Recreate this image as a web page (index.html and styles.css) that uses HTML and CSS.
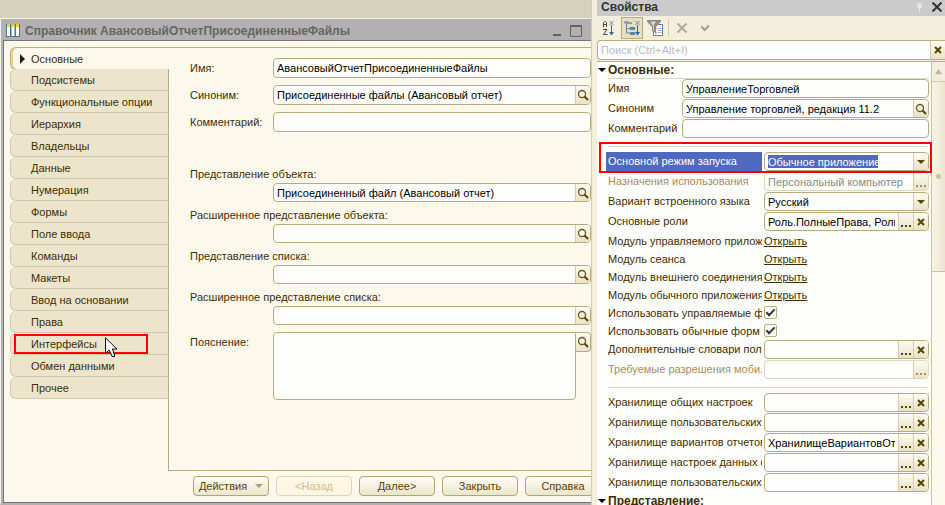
FILE: index.html
```html
<!DOCTYPE html>
<html lang="ru">

<head>
    <meta charset="UTF-8">
    <meta name="viewport" content="width=device-width, initial-scale=1.0">
    <title>Справочник АвансовыйОтчетПрисоединенныеФайлы</title>
    <link rel="stylesheet" href="styles.css">
</head>

<body>
    <!-- shared icons -->
    <svg class="defs" aria-hidden="true">
        <symbol id="i-search" viewBox="0 0 12 12">
            <circle cx="5" cy="5" r="3.5" fill="#fffdf2" stroke="#6b5310" stroke-width="1.3" />
            <path d="M7.5 7.5L11 11" stroke="#5a4300" stroke-width="2" />
        </symbol>
        <symbol id="i-down" viewBox="0 0 8 4">
            <path d="M0 0h8L4 4z" fill="currentColor" />
        </symbol>
        <symbol id="i-clear" viewBox="0 0 8 8">
            <path d="M1 1l6 6M7 1L1 7" stroke="currentColor" stroke-width="2" />
        </symbol>
        <symbol id="i-dots" viewBox="0 0 10 2">
            <path d="M0 0h2v2H0zM4 0h2v2H4zM8 0h2v2H8z" fill="currentColor" />
        </symbol>
    </svg>

    <main id="desktop">
        <section class="window">
            <header class="titlebar">
                <svg class="title-icon" viewBox="0 0 14 13">
                    <rect width="14" height="13" fill="#4d7590" />
                    <path d="M1 1h3v11H1zM5.500 1h3v11h-3zM10 1h3v11h-3z" fill="#fff" />
                    <path d="M1 0h3v3H1zM5.500 0h3v3h-3zM10 0h3v3h-3z" fill="#f0cf3c" />
                </svg>
                <h1>Справочник АвансовыйОтчетПрисоединенныеФайлы</h1>
                <button class="win-btn" aria-label="Свернуть"><svg viewBox="0 0 12 12"><path d="M2 10h8" stroke="#666661" stroke-width="2" /></svg></button>
                <button class="win-btn" aria-label="Развернуть"><svg viewBox="0 0 12 12"><path d="M.5 1h11v10.500H.5z" fill="none" stroke="#666661" /><path d="M0 1h12" stroke="#666661" stroke-width="2" /></svg></button>
            </header>

            <div class="window-body">
                <nav class="tabs">
                    <button class="tab active">Основные</button>
                    <button class="tab">Подсистемы</button>
                    <button class="tab">Функциональные опции</button>
                    <button class="tab">Иерархия</button>
                    <button class="tab">Владельцы</button>
                    <button class="tab">Данные</button>
                    <button class="tab">Нумерация</button>
                    <button class="tab">Формы</button>
                    <button class="tab">Поле ввода</button>
                    <button class="tab">Команды</button>
                    <button class="tab">Макеты</button>
                    <button class="tab">Ввод на основании</button>
                    <button class="tab">Права</button>
                    <button class="tab marked">Интерфейсы
                        <svg class="cursor" viewBox="0 0 12 21"><path d="M.5 .8V16.500l3.700-3.500 3 6.500h2.300V18L7.500 12H11.800z" fill="#fff" stroke="#000" /></svg>
                    </button>
                    <button class="tab">Обмен данными</button>
                    <button class="tab">Прочее</button>
                </nav>

                <form class="page">
                    <div class="row">
                        <label for="name">Имя:</label>
                        <div class="field"><input type="text" id="name" value="АвансовыйОтчетПрисоединенныеФайлы"></div>
                    </div>
                    <div class="row">
                        <label for="synonym">Синоним:</label>
                        <div class="field"><input type="text" id="synonym" value="Присоединенные файлы (Авансовый отчет)"><button type="button" aria-label="Открыть"><svg class="search"><use href="#i-search" /></svg></button></div>
                    </div>
                    <div class="row">
                        <label for="comment">Комментарий:</label>
                        <div class="field"><input type="text" id="comment"></div>
                    </div>

                    <div class="stacked first">
                        <label for="objView">Представление объекта:</label>
                        <div class="field"><input type="text" id="objView" value="Присоединенный файл (Авансовый отчет)"><button type="button" aria-label="Открыть"><svg class="search"><use href="#i-search" /></svg></button></div>
                    </div>
                    <div class="stacked">
                        <label for="objViewExt">Расширенное представление объекта:</label>
                        <div class="field"><input type="text" id="objViewExt"><button type="button" aria-label="Открыть"><svg class="search"><use href="#i-search" /></svg></button></div>
                    </div>
                    <div class="stacked">
                        <label for="listView">Представление списка:</label>
                        <div class="field"><input type="text" id="listView"><button type="button" aria-label="Открыть"><svg class="search"><use href="#i-search" /></svg></button></div>
                    </div>
                    <div class="stacked">
                        <label for="listViewExt">Расширенное представление списка:</label>
                        <div class="field"><input type="text" id="listViewExt"><button type="button" aria-label="Открыть"><svg class="search"><use href="#i-search" /></svg></button></div>
                    </div>
                    <div class="row note">
                        <label for="note">Пояснение:</label>
                        <textarea id="note"></textarea>
                        <button type="button" class="note-btn" aria-label="Открыть"><svg class="search"><use href="#i-search" /></svg></button>
                    </div>
                </form>
            </div>

            <footer class="actions">
                <button>Действия <svg class="down"><use href="#i-down" /></svg></button>
                <button disabled>&lt;Назад</button>
                <button>Далее&gt;</button>
                <button>Закрыть</button>
                <button>Справка</button>
            </footer>
        </section>
    </main>

    <aside id="properties">
        <header class="panel-title">
            <h2>Свойства</h2>
            <svg class="pin" viewBox="0 0 5 9"><path d="M.5 0h4v5h-4zM2 5h1v4H2z" fill="#e8e8e8" /></svg>
            <button class="close" aria-label="Закрыть"><svg viewBox="0 0 10 10"><path d="M.5 .5l9 9M9.500 .5l-9 9" stroke="#333" stroke-width="2" /></svg></button>
        </header>

        <div class="toolbar">
            <button aria-label="По алфавиту">
                <svg viewBox="0 0 16 16">
                    <path d="M2.500 7V2.500L3.500 1.500h1L5.500 2.500V7M2.500 4.500h3M2 9.500h4L2.500 14.500H6.500" fill="none" stroke="#444" />
                    <path d="M10.500 5v9" stroke="#2d6da3" />
                    <path d="M8.500 1l4 4M12.500 1l-4 4" stroke="#5b8fc0" />
                    <path d="M8 12h5l-2.500 3.500z" fill="#2d6da3" />
                </svg>
            </button>
            <button class="pressed" aria-label="По категориям">
                <svg viewBox="0 0 16 16">
                    <path d="M1 1v2.500h5M2.500 4v9h4M2.500 8.500h4" fill="none" stroke="#6f8796" />
                    <path d="M1 1h3l1 1h3v2H1z" fill="#8aa0ad" />
                    <path d="M6 7h5v3H6zM6 12h5v3H6z" fill="#5b88a8" />
                    <path d="M13.500 5v9" stroke="#2d6da3" />
                    <path d="M11.500 1l4 4M15.500 1l-4 4" stroke="#5b8fc0" />
                    <path d="M11 12h5l-2.500 3.500z" fill="#2d6da3" />
                </svg>
            </button>
            <button aria-label="Только важные">
                <svg viewBox="0 0 16 16">
                    <path d="M6.500 4.500h9v11h-9z" fill="#fff" stroke="#5a7fa3" />
                    <path d="M8 8h1.500v1.500H8zM8 12h1.500v1.500H8z" fill="#e0552b" />
                    <path d="M10.500 8.500h4M10.500 10.500h4M10.500 12.500h4" stroke="#9eb6d0" />
                    <path d="M0 0h14v1.500L9 7v6l-4-2V7L0 1.500z" fill="#8a8a86" />
                    <path d="M3 1.500h6L7 5v6L6 10V6z" fill="#d5d5d0" />
                </svg>
            </button>
            <i class="divider"></i>
            <button disabled aria-label="Отменить"><svg viewBox="0 0 16 16"><path d="M3.500 3.500l9 9M12.500 3.500l-9 9" stroke="#b5a5a3" stroke-width="2" /></svg></button>
            <button disabled aria-label="Применить"><svg viewBox="0 0 16 16"><path d="M4.500 6.500l3 3.500 4.500-4.500" fill="none" stroke="#9aa393" stroke-width="2" /></svg></button>
        </div>

        <div class="field find"><input type="text" placeholder="Поиск (Ctrl+Alt+I)" aria-label="Поиск"><button aria-label="Очистить"><svg class="clear"><use href="#i-clear" /></svg></button></div>

        <div class="scroller">
            <form class="props">
                <h3><svg class="down"><use href="#i-down" /></svg>Основные:</h3>
                <div class="prop wide">
                    <label for="pName">Имя</label>
                    <div class="field"><input type="text" id="pName" value="УправлениеТорговлей"></div>
                </div>
                <div class="prop wide">
                    <label for="pSynonym">Синоним</label>
                    <div class="field"><input type="text" id="pSynonym" value="Управление торговлей, редакция 11.2"><button type="button" aria-label="Открыть"><svg class="search"><use href="#i-search" /></svg></button></div>
                </div>
                <div class="prop wide">
                    <label for="pComment">Комментарий</label>
                    <div class="field"><input type="text" id="pComment"></div>
                </div>

                <hr>
                <div class="prop current">
                    <label for="runMode">Основной режим запуска</label>
                    <div class="field"><select id="runMode"><option>Обычное приложение</option></select><span class="drop"><svg class="down"><use href="#i-down" /></svg></span></div>
                </div>
                <div class="prop off">
                    <label for="purpose">Назначения использования</label>
                    <div class="field"><input type="text" id="purpose" value="Персональный компьютер" disabled><button type="button" disabled aria-label="Выбрать"><svg class="dots"><use href="#i-dots" /></svg></button></div>
                </div>
                <div class="prop">
                    <label for="lang">Вариант встроенного языка</label>
                    <div class="field"><select id="lang"><option>Русский</option></select><span class="drop"><svg class="down"><use href="#i-down" /></svg></span></div>
                </div>
                <div class="prop">
                    <label for="roles">Основные роли</label>
                    <div class="field"><input type="text" id="roles" value="Роль.ПолныеПрава, Роль"><button type="button" aria-label="Выбрать"><svg class="dots"><use href="#i-dots" /></svg></button><button type="button" aria-label="Очистить"><svg class="clear"><use href="#i-clear" /></svg></button></div>
                </div>
                <div class="prop short"><span class="caption">Модуль управляемого прилож</span><a href="#">Открыть</a></div>
                <div class="prop short"><span class="caption">Модуль сеанса</span><a href="#">Открыть</a></div>
                <div class="prop short"><span class="caption">Модуль внешнего соединения</span><a href="#">Открыть</a></div>
                <div class="prop short"><span class="caption">Модуль обычного приложения</span><a href="#">Открыть</a></div>
                <div class="prop short">
                    <label for="managed">Использовать управляемые ф</label>
                    <input type="checkbox" id="managed" checked>
                </div>
                <div class="prop short">
                    <label for="ordinary">Использовать обычные форм</label>
                    <input type="checkbox" id="ordinary" checked>
                </div>
                <div class="prop">
                    <label for="dict">Дополнительные словари пол</label>
                    <div class="field"><input type="text" id="dict"><button type="button" aria-label="Выбрать"><svg class="dots"><use href="#i-dots" /></svg></button><button type="button" aria-label="Очистить"><svg class="clear"><use href="#i-clear" /></svg></button></div>
                </div>
                <div class="prop off">
                    <label for="mobile">Требуемые разрешения моби.</label>
                    <div class="field"><input type="text" id="mobile" disabled><button type="button" disabled aria-label="Выбрать"><svg class="dots"><use href="#i-dots" /></svg></button></div>
                </div>

                <hr>
                <div class="prop">
                    <label for="st1">Хранилище общих настроек</label>
                    <div class="field"><input type="text" id="st1"><button type="button" aria-label="Выбрать"><svg class="dots"><use href="#i-dots" /></svg></button><button type="button" aria-label="Очистить"><svg class="clear"><use href="#i-clear" /></svg></button></div>
                </div>
                <div class="prop">
                    <label for="st2">Хранилище пользовательских</label>
                    <div class="field"><input type="text" id="st2"><button type="button" aria-label="Выбрать"><svg class="dots"><use href="#i-dots" /></svg></button><button type="button" aria-label="Очистить"><svg class="clear"><use href="#i-clear" /></svg></button></div>
                </div>
                <div class="prop">
                    <label for="st3">Хранилище вариантов отчетов</label>
                    <div class="field"><input type="text" id="st3" value="ХранилищеВариантовОтч"><button type="button" aria-label="Выбрать"><svg class="dots"><use href="#i-dots" /></svg></button><button type="button" aria-label="Очистить"><svg class="clear"><use href="#i-clear" /></svg></button></div>
                </div>
                <div class="prop">
                    <label for="st4">Хранилище настроек данных ф</label>
                    <div class="field"><input type="text" id="st4"><button type="button" aria-label="Выбрать"><svg class="dots"><use href="#i-dots" /></svg></button><button type="button" aria-label="Очистить"><svg class="clear"><use href="#i-clear" /></svg></button></div>
                </div>
                <div class="prop">
                    <label for="st5">Хранилище пользовательских</label>
                    <div class="field"><input type="text" id="st5"><button type="button" aria-label="Выбрать"><svg class="dots"><use href="#i-dots" /></svg></button><button type="button" aria-label="Очистить"><svg class="clear"><use href="#i-clear" /></svg></button></div>
                </div>
                <h3><svg class="down"><use href="#i-down" /></svg>Представление:</h3>
            </form>
            <div class="scrollbar">
                <button aria-label="Вверх"><svg viewBox="0 0 8 8"><path d="M0 7L4 1l4 6z" fill="#b9b6a8" /></svg></button>
                <div class="thumb"></div>
            </div>
        </div>
    </aside>
</body>

</html>
```

FILE: styles.css
```css
*,
*:before,
*:after {
    box-sizing: border-box;
    margin: 0;
    padding: 0;
}

body {
    display: flex;
    height: 100vh;
    overflow: hidden;
    background: #d5d1bd;
    color: #3f2d00;
    font: 11px/16px "Liberation Sans", Arial, sans-serif;
}

button,
input,
select,
textarea {
    font: inherit;
    color: inherit;
    border: 0;
    background: none;
    outline: 0;
}

svg {
    display: block;
    flex: none;
}

.defs {
    position: absolute;
    width: 0;
    height: 0;
}

.search {
    width: 12px;
    height: 12px;
}

.down {
    width: 8px;
    height: 4px;
}

.clear {
    width: 8px;
    height: 8px;
}

.dots {
    width: 10px;
    height: 2px;
    margin-top: 8px;
}

/* left side */
#desktop {
    flex: 1;
    min-width: 0;
    display: flex;
    padding-top: 18px;
    overflow: hidden;
    border-right: 1px solid #d0cdc4;
}

.window {
    flex: 1;
    min-width: 0;
    display: flex;
    flex-direction: column;
    border-top: 1px solid #f4f2ea;
    border-left: 1px solid #f4f2ea;
    border-bottom: 2px solid #b3b0b3;
    background: #b3b0b3;
    padding-left: 2px;
}

.titlebar {
    display: flex;
    align-items: center;
    height: 21px;
    padding: 2px 9px 0 3px;
}

.title-icon {
    width: 14px;
    height: 13px;
    margin-right: 5px;
}

h1 {
    flex: 1;
    font-size: 12px;
    line-height: 18px;
    color: #666661;
    white-space: nowrap;
}

.win-btn {
    width: 12px;
    margin-left: 7px;
}

.window-body {
    flex: 1;
    min-height: 0;
    display: flex;
    padding: 6px 0 0 6px;
    background: #fcf9ec;
    border-top: 1px solid #77756f;
    border-left: 1px solid #77756f;
}

.tabs {
    width: 159px;
    display: flex;
    flex-direction: column;
    position: relative;
    z-index: 1;
}

.tabs:after {
    content: '';
    flex: 1;
    border-right: 1px solid #b5ad80;
}

.tab {
    position: relative;
    height: 22px;
    padding-left: 20px;
    text-align: left;
    background: #ece5cc;
    border: 1px solid #cfc8ac;
    border-top-width: 0;
    border-right-color: #b5ad80;
    border-radius: 6px 0 0 6px;
}

.tab.active {
    height: 23px;
    background: #fcf9ec;
    border-color: #b5ad80;
    border-top-width: 1px;
    border-right: 0;
    box-shadow: inset 2px 0 #f8d08c;
    margin-bottom: -1px;
}

.tab.active:before {
    content: '';
    position: absolute;
    left: 9px;
    top: 6px;
    border: 5px solid transparent;
    border-left-color: #222;
    border-right: 0;
}

.tab.marked {
    z-index: 1;
}

.tab.marked:after {
    content: '';
    position: absolute;
    left: 3px;
    top: 1px;
    width: 134px;
    height: 20px;
    border: 2px solid #ff0000;
}

.cursor {
    position: absolute;
    z-index: 1;
    left: 94px;
    top: 4px;
    width: 12px;
    height: 21px;
}

.page {
    flex: 1;
    min-width: 0;
    padding: 10px 0 0 21px;
    border-top: 1px solid #b5ad80;
    border-bottom: 1px solid #b5ad80;
}

.row {
    display: flex;
    margin-bottom: 7px;
}

.row label {
    width: 83px;
    padding-top: 2px;
}

.field {
    flex: 1;
    min-width: 0;
    display: flex;
    height: 20px;
    border: 1px solid #b5ad80;
    border-radius: 4px;
    background: #fdfefc;
    overflow: hidden;
}

.field input,
.field select {
    flex: 1;
    width: 0;
    padding: 0 3px;
    color: #000;
}

.field button,
.drop,
.note-btn {
    display: flex;
    align-items: center;
    justify-content: center;
    width: 15px;
    color: #5a4300;
    border-left: 1px solid #d3ccac;
    background: linear-gradient(#fdfbf2, #e9e2c6);
}

.stacked {
    margin-bottom: 5px;
}

.stacked.first {
    margin-top: 34px;
}

.stacked label {
    display: block;
    line-height: 17px;
}

.stacked .field {
    height: 19px;
    margin-left: 83px;
}

.note {
    padding-top: 2px;
}

.note textarea {
    flex: 1;
    min-width: 0;
    height: 68px;
    border: 1px solid #b5ad80;
    border-radius: 4px 0 4px 4px;
    background: #fdfefc;
    resize: none;
}

.note-btn {
    height: 20px;
    border: 1px solid #b5ad80;
    border-left: 0;
    border-radius: 0 4px 4px 0;
}

.actions {
    display: flex;
    gap: 7px;
    padding: 5px 0 6px 189px;
    border-left: 1px solid #77756f;
    border-bottom: 1px solid #77756f;
    background: #fcf9ec;
    overflow: hidden;
}

.actions button {
    flex: none;
    display: flex;
    align-items: center;
    justify-content: center;
    gap: 8px;
    width: 76px;
    height: 20px;
    color: #5a4300;
    border: 1px solid #aea678;
    border-radius: 4px;
    background: linear-gradient(#fefdf6, #ebe5cb);
}

.actions button:disabled {
    color: #d9b98a;
    border-color: #ddd5b8;
    background: #fcf6e4;
}

.actions .down {
    color: #b09a70;
}

/* properties panel */
#properties {
    width: 353px;
    display: flex;
    flex-direction: column;
    border-left: 5px solid #f3efdc;
    background: #f3efdc;
}

.panel-title {
    display: flex;
    align-items: center;
    height: 16px;
    padding: 0 3px 2px 4px;
    background: #cbcbcb;
}

h2 {
    flex: 1;
    font-size: 12px;
    line-height: 14px;
    color: #333;
}

.pin {
    width: 5px;
    height: 9px;
    margin-right: 10px;
}

.close {
    width: 10px;
}

.toolbar {
    display: flex;
    align-items: center;
    gap: 1px;
    height: 24px;
    padding-left: 1px;
}

.toolbar button {
    width: 22px;
    height: 22px;
    padding: 2px;
    border: 1px solid transparent;
}

.toolbar .pressed {
    border-color: #b5ad80;
    background: #e5dfc2;
}

.divider {
    width: 1px;
    height: 18px;
    margin: 0 1px;
    background: #d3ccac;
}

.find {
    flex: none;
    border-radius: 4px 0 0 4px;
    border-right: 0;
}

.find input::placeholder {
    color: #bdbdb9;
}

.scroller {
    flex: 1;
    min-height: 0;
    display: flex;
    margin-top: 1px;
    border-top: 1px solid #b5ad80;
    background: #fdfefc;
}

.props {
    flex: 1;
    min-width: 0;
    padding: 0 2px 0 11px;
}

h3 {
    position: relative;
    font-size: 12px;
    line-height: 16px;
    border-bottom: 1px solid #ddd8c8;
}

h3 .down {
    position: absolute;
    left: -10px;
    top: 6px;
    color: #000;
}

hr {
    margin: 7px 2px 5px 0;
    border: 0;
    border-top: 1px solid #d8d4c2;
}

.prop {
    position: relative;
    display: flex;
    height: 20px;
}

.prop label,
.prop .caption {
    width: 154px;
    margin-right: 2px;
    line-height: 19px;
    white-space: nowrap;
    overflow: hidden;
}

.prop.wide label {
    width: 72px;
}

.prop .field {
    height: 19px;
}

.prop.short {
    height: 18px;
}

.prop a {
    color: inherit;
    line-height: 19px;
}

.prop.off,
.prop.off .dots {
    color: #a58d5c;
}

.prop.off .field {
    border-color: #ddd6ba;
}

.prop.off input {
    color: #8a8a86;
}

.prop select {
    appearance: none;
}

.prop.current label {
    width: 156px;
    height: 19px;
    margin-left: -2px;
    padding-left: 2px;
    color: #fff;
    background: #4f68c0;
}

.current select {
    color: #fff;
    background: linear-gradient(#4f68c0, #4f68c0) no-repeat 3px 2px / 110px 13px;
}

.current:after {
    content: '';
    position: absolute;
    z-index: 1;
    inset: -10px -3px -1px -9px;
    border: 2px solid #ff0000;
    pointer-events: none;
}

input[type="checkbox"] {
    appearance: none;
    width: 13px;
    height: 13px;
    margin-top: 2px;
    border: 1px solid #b5ad80;
    border-radius: 2px;
    background: #fff;
}

input[type="checkbox"]:checked:before {
    content: '';
    display: block;
    width: 9px;
    height: 5px;
    margin: 2px 0 0 1px;
    border: solid #333;
    border-width: 0 0 2px 2px;
    transform: rotate(-45deg);
}

.scrollbar {
    width: 14px;
    border-left: 1px solid #c9c3a4;
    background: #fcf9ec;
}

.scrollbar button {
    display: flex;
    align-items: center;
    justify-content: center;
    width: 100%;
    height: 20px;
    border-bottom: 1px solid #d3ccac;
    background: #f3efdc;
}

.scrollbar button svg {
    width: 7px;
}

.thumb {
    height: 43%;
    border-bottom: 1px solid #c9c3a4;
    background: radial-gradient(circle at 50% 50%, #c9c3a4 2px, transparent 3px), linear-gradient(90deg, #f8f5e8, #ebe5cf);
}
```
